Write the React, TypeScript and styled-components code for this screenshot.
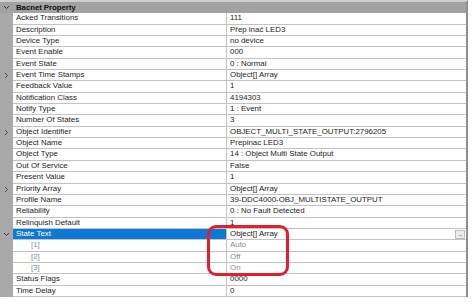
import React from "react";
import styled, { createGlobalStyle } from "styled-components";

const Global = createGlobalStyle`
  html, body { margin: 0; padding: 0; background: #ffffff; }
  body { font-family: "Liberation Sans", Arial, sans-serif; }
`;

const ROW = 11.35;

const Page = styled.div`
  position: relative;
  width: 474px;
  height: 308px;
  background: #ffffff;
  overflow: hidden;
`;

const Grid = styled.div`
  width: 466px;
  border-top: 2px solid #cfcfcf;
  border-right: 2px solid #8e8e8e;
  display: flex;
  flex-direction: column;
`;

const HeaderRow = styled.div`
  display: grid;
  grid-template-columns: 13px 1fr;
  height: ${ROW}px;
  background: #a2a2a2;
  align-items: center;
`;

const Gutter = styled.div`
  height: 100%;
  background: #a9a9a9;
  display: flex;
  align-items: center;
  justify-content: center;
`;

const HeaderGutter = styled(Gutter)`
  background: #a2a2a2;
`;

const Title = styled.div`
  padding-left: 3px;
  font-size: 7.9px;
  font-weight: bold;
  color: #111;
  letter-spacing: -0.1px;
  line-height: ${ROW}px;
  white-space: nowrap;
`;

const Row = styled.div`
  display: grid;
  grid-template-columns: 13px 214px 1fr;
  height: ${ROW}px;
`;

const Cell = styled.div<{ $selected?: boolean; $indent?: boolean; $muted?: boolean }>`
  box-sizing: border-box;
  height: 100%;
  border-bottom: 1px solid #c3c3c3;
  padding-left: ${(p) => (p.$indent ? 18 : 3)}px;
  font-size: 7.9px;
  line-height: ${ROW - 1}px;
  white-space: nowrap;
  overflow: hidden;
  color: ${(p) => (p.$selected ? "#ffffff" : p.$muted ? "#8c8c8c" : "#1c1c1c")};
  background: ${(p) => (p.$selected ? "#0c79d6" : "#ffffff")};
`;

const NameCell = styled(Cell)`
  border-right: 1px solid #c3c3c3;
`;

const ValueCell = styled(Cell)`
  display: flex;
  align-items: center;
  justify-content: space-between;
  padding-right: 1px;
`;

const DotsButton = styled.div`
  width: 10px;
  height: 9px;
  box-sizing: border-box;
  border: 1px solid #bdbdbd;
  background: #ececec;
  font-size: 6px;
  line-height: 6px;
  text-align: center;
  color: #333;
  letter-spacing: -0.5px;
`;

const Annotation = styled.div`
  position: absolute;
  left: 207px;
  top: 225px;
  width: 82px;
  height: 51px;
  box-sizing: border-box;
  border: 3px solid #e2202b;
  border-radius: 9px;
  pointer-events: none;
`;

type Exp = "none" | "collapsed" | "expanded";

interface Item {
  name: string;
  value: string;
  exp?: Exp;
  selected?: boolean;
  sub?: boolean;
  button?: boolean;
}

const items: Item[] = [
  { name: "Acked Transitions", value: "111" },
  { name: "Description", value: "Přep inač LED3" },
  { name: "Device Type", value: "no device" },
  { name: "Event Enable", value: "000" },
  { name: "Event State", value: "0 : Normal" },
  { name: "Event Time Stamps", value: "Object[] Array", exp: "collapsed" },
  { name: "Feedback Value", value: "1" },
  { name: "Notification Class", value: "4194303" },
  { name: "Notify Type", value: "1 : Event" },
  { name: "Number Of States", value: "3" },
  { name: "Object Identifier", value: "OBJECT_MULTI_STATE_OUTPUT:2796205", exp: "collapsed" },
  { name: "Object Name", value: "Prepinac LED3" },
  { name: "Object Type", value: "14 : Object Multi State Output" },
  { name: "Out Of Service", value: "False" },
  { name: "Present Value", value: "1" },
  { name: "Priority Array", value: "Object[] Array", exp: "collapsed" },
  { name: "Profile Name", value: "39-DDC4000-OBJ_MULTISTATE_OUTPUT" },
  { name: "Reliability", value: "0 : No Fault Detected" },
  { name: "Relinquish Default", value: "1" },
  { name: "State Text", value: "Object[] Array", exp: "expanded", selected: true, button: true },
  { name: "[1]", value: "Auto", sub: true },
  { name: "[2]", value: "Off", sub: true },
  { name: "[3]", value: "On", sub: true },
  { name: "Status Flags", value: "0000" },
  { name: "Time Delay", value: "0" },
];

const Chevron: React.FC<{ dir: "right" | "down" }> = ({ dir }) =>
  dir === "right" ? (
    <svg width="5" height="7" viewBox="0 0 5 7">
      <path d="M1 1 L3.5 3.5 L1 6" fill="none" stroke="#4a4a4a" strokeWidth="1" />
    </svg>
  ) : (
    <svg width="7" height="5" viewBox="0 0 7 5">
      <path d="M1 1 L3.5 3.5 L6 1" fill="none" stroke="#3a3a3a" strokeWidth="1" />
    </svg>
  );

export default function App() {
  return (
    <Page>
      <Global />
      <Grid>
        <HeaderRow>
          <HeaderGutter>
            <Chevron dir="down" />
          </HeaderGutter>
          <Title>Bacnet Property</Title>
        </HeaderRow>
        {items.map((it) => (
          <Row key={it.name}>
            <Gutter>
              {it.exp === "collapsed" && <Chevron dir="right" />}
              {it.exp === "expanded" && <Chevron dir="down" />}
            </Gutter>
            <NameCell $selected={it.selected} $indent={it.sub} $muted={it.sub}>
              {it.name}
            </NameCell>
            <ValueCell $muted={it.sub}>
              <span>{it.value}</span>
              {it.button && <DotsButton>...</DotsButton>}
            </ValueCell>
          </Row>
        ))}
      </Grid>
      <Annotation />
    </Page>
  );
}
